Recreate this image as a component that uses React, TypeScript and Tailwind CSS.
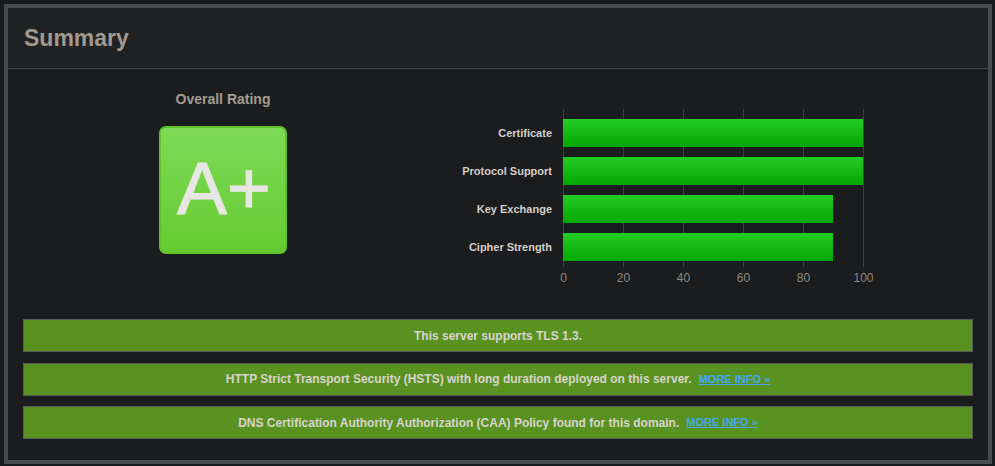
import React from 'react';

// ── Data ───────────────────────────────────────────────────────────────────────

const SCORES: ReadonlyArray<{ label: string; value: number }> = [
  { label: 'Certificate', value: 100 },
  { label: 'Protocol Support', value: 100 },
  { label: 'Key Exchange', value: 90 },
  { label: 'Cipher Strength', value: 90 },
];

const TICKS = [0, 20, 40, 60, 80, 100];

const NOTICES: ReadonlyArray<{ text: string; link?: boolean }> = [
  { text: 'This server supports TLS 1.3.' },
  { text: 'HTTP Strict Transport Security (HSTS) with long duration deployed on this server.', link: true },
  { text: 'DNS Certification Authority Authorization (CAA) Policy found for this domain.', link: true },
];

// ── Presentational bits ────────────────────────────────────────────────────────

function GradeBox() {
  return (
    <div className="flex h-[128px] w-[128px] items-center justify-center rounded-[7px] border-2 border-[#5ec42c] bg-gradient-to-b from-[#7fd956] to-[#64cc2e]">
      <span className="text-[75px] leading-none text-[#e8e6e3] pl-[2px] pb-[4px] [-webkit-text-stroke:1px_#e8e6e3]">A+</span>
    </div>
  );
}

function ScoreChart() {
  return (
    <div className="flex">
      <div className="flex w-[117px] flex-col gap-[10px] pt-[10px] pr-[11px]">
        {SCORES.map((s) => (
          <div key={s.label} className="flex h-[28px] items-center justify-end text-[11px] font-bold text-[#d3cfc8]">
            {s.label}
          </div>
        ))}
      </div>
      <div className="w-[300px]">
        <div className="relative flex h-[158px] flex-col gap-[10px] pt-[10px]">
          {TICKS.map((t) => (
            <div
              key={t}
              className="absolute top-0 bottom-0 w-px bg-[#3c3f42]"
              style={{ left: `${t * 3}px` }}
            />
          ))}
          {SCORES.map((s) => (
            <div key={s.label} className="relative h-[28px]">
              <div
                className="h-full bg-gradient-to-b from-[#22cc22] to-[#00a800]"
                style={{ width: `${s.value * 3}px` }}
              />
            </div>
          ))}
        </div>
        <div className="relative h-[22px]">
          {TICKS.map((t) => (
            <span
              key={t}
              className="absolute top-[4px] -translate-x-1/2 text-[12px] leading-[14px] text-[#8e8980]"
              style={{ left: `${t * 3 + 0.5}px` }}
            >
              {t}
            </span>
          ))}
        </div>
      </div>
    </div>
  );
}

function Notice({ text, link }: { text: string; link?: boolean }) {
  return (
    <div className="flex h-[33px] items-center justify-center border border-[#565b5e] bg-[#5a9222] text-[12px] font-bold text-[#d8d4cc]">
      <span>{text}</span>
      {link && (
        <a href="#" className="ml-[7px] text-[11px] text-[#41a9f2] underline underline-offset-[1px]">
          MORE INFO »
        </a>
      )}
    </div>
  );
}

// ── Page ───────────────────────────────────────────────────────────────────────

export default function App() {
  return (
    <div
      className="h-[466px] w-[995px] bg-[#181a1b] p-[4px] pr-[3px]"
      style={{ fontFamily: '"Liberation Sans", Arial, sans-serif' }}
    >
      <div className="flex h-[460px] flex-col border-4 border-[#464b4f] bg-[#1b1c1e]">
        <div className="flex h-[61px] items-center border-b border-[#3c4445] bg-[#202223] pl-[16px]">
          <h2 className="text-[23px] font-bold text-[#a09a90]">Summary</h2>
        </div>
        <div className="flex h-[250px]">
          <div className="flex w-[430px] flex-col items-center pt-[21px]">
            <h3 className="text-[14px] font-bold leading-[18px] text-[#a29c92]">Overall Rating</h3>
            <div className="mt-[18px]">
              <GradeBox />
            </div>
          </div>
          <div className="pt-[40px] pl-[8px]">
            <ScoreChart />
          </div>
        </div>
        <div className="flex flex-col gap-[10.5px] pl-[15px] pr-[15px]">
          {NOTICES.map((n) => (
            <Notice key={n.text} text={n.text} link={n.link} />
          ))}
        </div>
      </div>
    </div>
  );
}
